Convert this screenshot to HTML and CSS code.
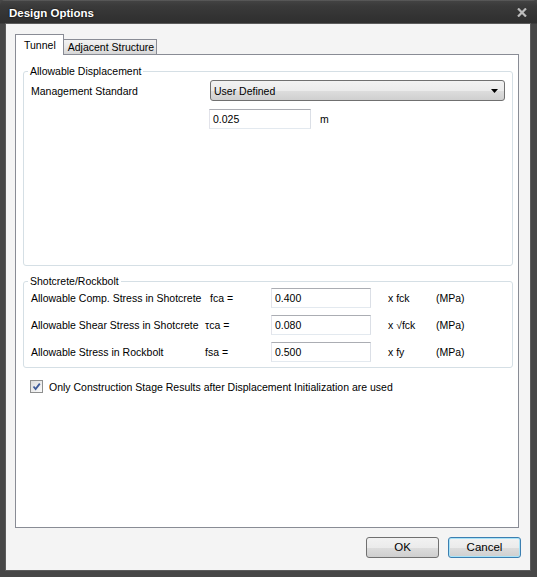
FILE: index.html
```html
<!DOCTYPE html>
<html>
<head>
<meta http-equiv="Content-Type" content="text/html; charset=utf-8">
<title>Design Options</title>
<link rel="stylesheet" href="styles.css">
</head>
<body>
<div class="window">
  <div class="titlebar">
    <span class="title">Design Options</span>
    <svg class="close" width="10" height="9" viewBox="0 0 10 9">
      <path d="M1 0.5 L9 8.5 M9 0.5 L1 8.5" stroke="#bcbcbc" stroke-width="2.2"/>
    </svg>
  </div>
  <div class="client">
    <div class="tabs">
      <div class="tab active">Tunnel</div>
      <div class="tab">Adjacent Structure</div>
    </div>
    <div class="panel">
      <fieldset class="group disp">
        <legend>Allowable Displacement</legend>
        <div class="disp-grid">
          <span class="lbl">Management Standard</span>
          <div class="select">
            <span>User Defined</span>
            <svg width="7" height="4" viewBox="0 0 7 4"><polygon points="0,0 7,0 3.5,4" fill="#000"/></svg>
          </div>
          <span></span>
          <div class="valrow">
            <span class="textbox wide">0.025</span>
            <span class="unit">m</span>
          </div>
        </div>
      </fieldset>
      <fieldset class="group shot">
        <legend>Shotcrete/Rockbolt</legend>
        <div class="stress-grid">
          <span class="lbl">Allowable Comp. Stress in Shotcrete</span>
          <span class="sym s1">fca =</span>
          <span class="textbox">0.400</span>
          <span class="factor">x fck</span>
          <span class="mpa">(MPa)</span>

          <span class="lbl">Allowable Shear Stress in Shotcrete</span>
          <span class="sym">&tau;ca =</span>
          <span class="textbox">0.080</span>
          <span class="factor">x &radic;fck</span>
          <span class="mpa">(MPa)</span>

          <span class="lbl">Allowable Stress in Rockbolt</span>
          <span class="sym">fsa =</span>
          <span class="textbox">0.500</span>
          <span class="factor">x fy</span>
          <span class="mpa">(MPa)</span>
        </div>
      </fieldset>
      <div class="check-row">
        <span class="checkbox">
          <svg width="11" height="11" viewBox="0 0 11 11"><path d="M2.5 5.5 L4.6 8 L8.8 2.6" fill="none" stroke="#3d5a99" stroke-width="1.8"/></svg>
        </span>
        <span>Only Construction Stage Results after Displacement Initialization are used</span>
      </div>
    </div>
    <div class="buttons">
      <div class="btn">OK</div>
      <div class="btn default">Cancel</div>
    </div>
  </div>
</div>
</body>
</html>
```

FILE: styles.css
```css
body { margin: 0; background: #474747; }
.window {
  width: 537px;
  height: 577px;
  box-sizing: border-box;
  padding: 0 7px 7px 6px;
  display: flex;
  flex-direction: column;
  border-radius: 5px 5px 0 0;
  background: linear-gradient(#6a6a6a 0, #434343 1px, #3a3a3a 6px, #333 16px, #2f2f2f 23px, #474747 24px);
  font-family: "Liberation Sans", Arial, sans-serif;
  font-size: 10.5px;
  color: #000;
}
.titlebar {
  height: 24px;
  flex: none;
  display: flex;
  align-items: center;
  justify-content: space-between;
  padding: 0 3px 0 3px;
}
.title {
  color: #fff;
  font-weight: bold;
  font-size: 11.5px;
  text-shadow: 0 0 2px #000;
  margin-top: 2px;
}
.close { margin-top: 1px; }

.client {
  flex: 1;
  background: #f4f4f4;
  box-shadow: 0 0 0 1px #5c5c5c;
  padding: 11px 9px 0 9px;
  display: flex;
  flex-direction: column;
}

/* tab strip */
.tabs {
  height: 19px;
  display: flex;
  align-items: flex-end;
}
.tab {
  border: 1px solid #898c95;
  border-bottom: none;
  padding: 0 2px 0 4px;
  height: 14px;
  line-height: 14px;
  background: linear-gradient(#f2f2f2, #e8e8e8 50%, #d6d6d6);
}
.tab.active {
  height: 20px;
  line-height: 20px;
  padding: 0 7px 0 8px;
  background: #fff;
  margin-bottom: -1px;
  position: relative;
  z-index: 1;
  margin-right: -1px;
}

.panel {
  height: 474px;
  box-sizing: border-box;
  margin-right: 2px;
  border: 1px solid #898c95;
  background: #fff;
  padding: 10px 5px 0 7px;
}

.group {
  margin: 0;
  border: 1px solid #d5dfe5;
  border-radius: 3px;
  padding: 0 7px;
}
.group legend {
  padding: 0 2px;
  margin-left: -3px;
  line-height: 13px;
}
.disp { height: 197px; padding-top: 2px; }
.shot { margin-top: 9px; padding-bottom: 5px; }

.lbl { white-space: nowrap; }

.disp-grid {
  display: grid;
  grid-template-columns: 179px 295px;
  grid-template-rows: 21px 20px;
  row-gap: 8px;
  align-items: center;
}
.select {
  height: 21px;
  box-sizing: border-box;
  border: 1px solid #707070;
  border-radius: 3px;
  background: linear-gradient(#f2f2f2, #ebebeb 50%, #dddddd 51%, #cfcfcf);
  display: flex;
  align-items: center;
  justify-content: space-between;
  padding: 0 6px 0 3px;
}
.valrow { display: flex; align-items: center; }
.textbox {
  box-sizing: border-box;
  height: 20px;
  width: 100px;
  line-height: 18px;
  padding: 0 3px;
  background: #fff;
  border: 1px solid;
  border-color: #abadb3 #dbdfe6 #e3e9ef #e2e3ea;
}
.textbox.wide { width: 102px; margin-left: -1px; }
.unit { margin-left: 9px; }

.stress-grid {
  display: grid;
  grid-template-columns: 174px 66px 100px 17px 48px 30px;
  grid-auto-rows: 20px;
  row-gap: 7px;
  align-items: center;
}
.stress-grid .factor { grid-column: 5; }
.stress-grid .mpa { grid-column: 6; white-space: nowrap; }
.stress-grid .lbl { grid-column: 1; }
.s1 { padding-left: 5px; }

.check-row {
  margin: 12px 0 0 7px;
  display: flex;
  align-items: center;
  gap: 6px;
}
.checkbox {
  width: 13px;
  height: 13px;
  box-sizing: border-box;
  border: 1px solid #8e8f8f;
  background: linear-gradient(135deg, #dcdcdc, #fbfbfb);
  display: flex;
  align-items: center;
  justify-content: center;
}

.buttons {
  margin-top: 9px;
  display: flex;
  justify-content: flex-end;
  gap: 9px;
}
.btn {
  width: 73px;
  height: 21px;
  box-sizing: border-box;
  border: 1px solid #707070;
  border-radius: 3px;
  background: linear-gradient(#f2f2f2, #ebebeb 50%, #dddddd 51%, #cfcfcf);
  text-align: center;
  line-height: 19px;
  font-size: 11.5px;
}
.btn.default {
  border-color: #3c7fb1;
  box-shadow: inset 0 0 0 1px #a8e3f8;
}
```
